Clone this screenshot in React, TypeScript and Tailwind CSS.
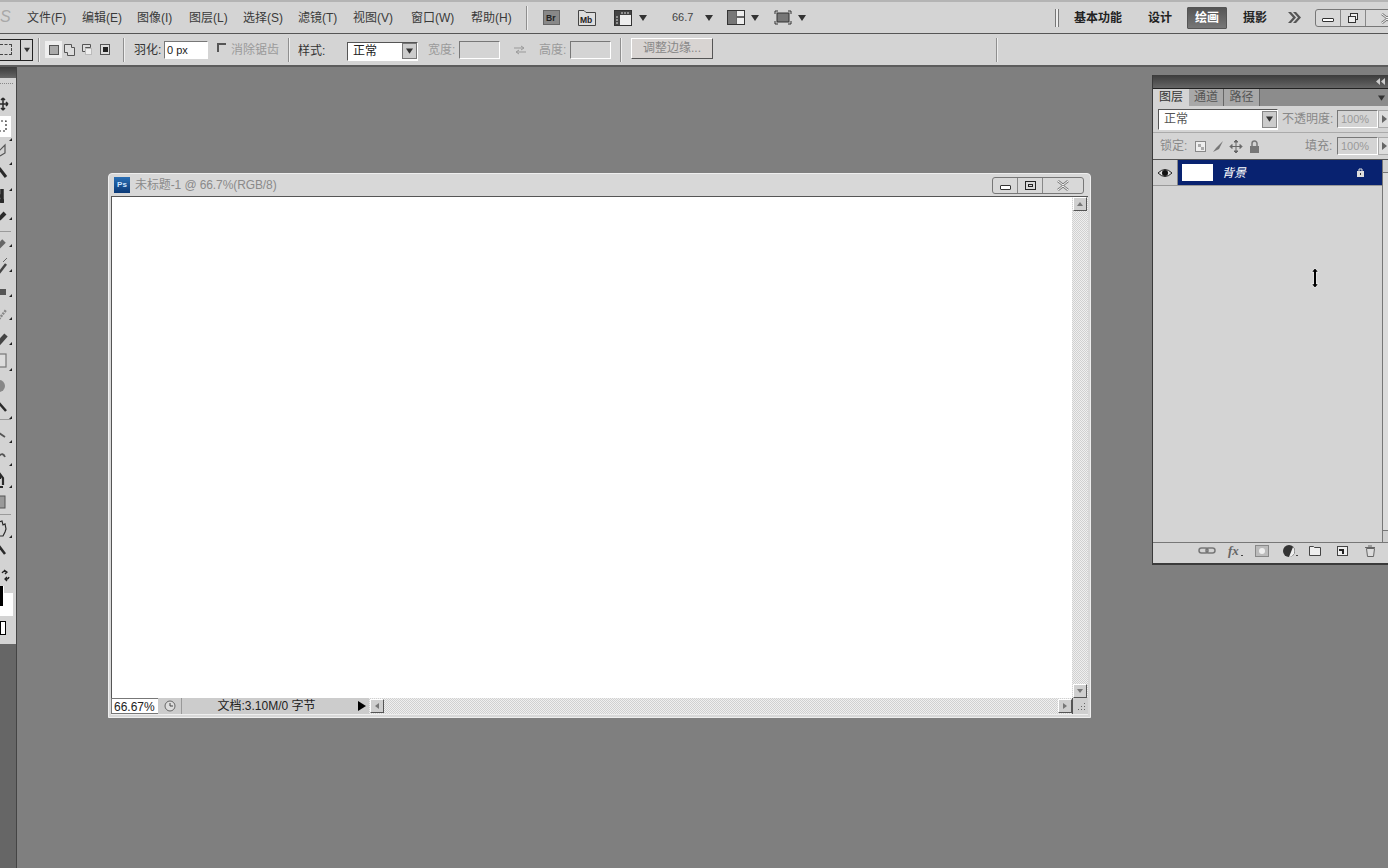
import React from "react";

const font = { fontFamily: '"Liberation Sans","Noto Sans CJK SC",sans-serif' };

function Menu({ label, w }: { label: string; w: number }) {
  return <span className="shrink-0 text-[12px] leading-none text-[#3a3a3a] whitespace-nowrap" style={{ width: w }}>{label}</span>;
}

function Tri({ className = "" }: { className?: string }) {
  return <svg width="8" height="6" viewBox="0 0 8 6" className={className}><path d="M0 0h8L4 6z" fill="#333" /></svg>;
}

function Sep({ className = "" }: { className?: string }) {
  return <div className={`w-px h-6 bg-[#8f8f8f] border-r border-[#eee] box-content shrink-0 ${className}`} />;
}

function ToolIcons() {
  return (
    <svg width="16" height="577" viewBox="0 0 16 577" className="block">
      <g stroke="#2a2a2a" strokeWidth="1.500" fill="none">
        <path d="M3 32v10M-2 37h10M3 31l-2 2M3 31l2 2M3 43l-2-2M3 43l2-2M8 37l-2-2M8 37l-2 2" />
        <rect x="-3" y="54" width="9" height="10" strokeDasharray="2 2" strokeWidth="1.200" />
        <path d="M-1 84l6-6v8l-5 3" strokeWidth="1.200" stroke="#555" />
        <path d="M-1 101l7 9" strokeWidth="3" />
        <path d="M2 122v14M-3 129h6M-3 134h7" strokeWidth="3.500" />
        <path d="M-1 152l6-6" strokeWidth="4" />
        <path d="M-2 180l6-6" strokeWidth="5" stroke="#666" />
        <path d="M-1 206l7-9" strokeWidth="2.500" stroke="#444" />
        <path d="M3 195l4-4" strokeWidth="1" stroke="#666" />
        <rect x="-3" y="222" width="9" height="6" fill="#555" strokeWidth="0" />
        <path d="M-1 252l7-9" strokeWidth="2.500" stroke="#888" strokeDasharray="2 1" />
        <path d="M-2 277l8-9" strokeWidth="4.500" stroke="#444" />
        <rect x="-3" y="287" width="9" height="13" fill="#ddd" stroke="#777" strokeWidth="1.200" />
        <circle cx="-1" cy="319" r="6" fill="#888" strokeWidth="0" />
        <path d="M-1 336l7 8" strokeWidth="2.500" />
        <path d="M-1 366l6 4" strokeWidth="1.800" stroke="#555" />
        <path d="M-1 389q4-4 6 1" strokeWidth="1.800" stroke="#555" />
        <path d="M0 412v-5l3 4v7M-2 420h5" strokeWidth="2.200" />
        <rect x="-3" y="429" width="8" height="12" fill="#999" stroke="#555" strokeWidth="1" />
        <path d="M-1 455l3-1 1 4 2-1 1 5-1 3-2 4h-4" strokeWidth="1.200" />
        <path d="M-1 479l6 8" strokeWidth="2.500" />
      </g>
      <path d="M2 506q2-3 5-1M4 503l3 2-2 2M9 510q-1 3-4 2M7 514l-2-2 2-2" stroke="#222" strokeWidth="1.300" fill="none" />
      <g fill="#222">
        {[74, 98, 124, 153, 180, 205, 230, 253, 278, 304, 352, 376, 399, 421, 471].map((y) => (
          <path key={y} d={`M9 ${y}h3v-3z`} />
        ))}
      </g>
    </svg>
  );
}

function Tools() {
  return (
    <aside className="w-[17px] shrink-0 flex flex-col border-r border-[#444] overflow-hidden">
      <div className="h-[11px] shrink-0 bg-gradient-to-b from-[#3c3c3c] to-[#666]" />
      <div className="h-[566px] shrink-0 bg-[#d3d3d3] relative">
        <div className="absolute top-[38px] left-0 w-[11px] h-[21px] bg-white" />
        <div className="absolute top-[5px] left-0 w-[13px] h-[2px] border-t border-dotted border-[#888]" />
        {[153, 341, 436].map((t) => <div key={t} className="absolute left-0 w-[11px] h-px bg-[#9a9a9a]" style={{ top: t }} />)}
        <div className="absolute top-[515px] left-0 w-[13px] h-[23px] bg-white" />
        <div className="absolute top-[508px] left-0 w-[3px] h-[20px] bg-black border-r border-b border-white box-content" />
        <div className="absolute top-[543px] left-0 w-[6px] h-[14px] bg-white border border-black" />
        <div className="absolute top-[-11px] left-0"><ToolIcons /></div>
      </div>
      <div className="flex-1 bg-[#666]" />
    </aside>
  );
}

function MenuBar() {
  const items: [string, number][] = [["文件(F)", 55], ["编辑(E)", 55], ["图像(I)", 52], ["图层(L)", 54], ["选择(S)", 55], ["滤镜(T)", 55], ["视图(V)", 58], ["窗口(W)", 60], ["帮助(H)", 48]];
  return (
    <header className="h-[34px] shrink-0 bg-[#d4d4d4] border-t-2 border-[#b4b4b4] border-b border-b-[#555] flex items-center pl-[27px] overflow-hidden relative" style={font}>
      <span className="absolute left-0 top-[7px] italic text-[#a8a8a8] text-[16px] leading-none">S</span>
      {items.map(([l, w]) => <Menu key={l} label={l} w={w} />)}
      <Sep className="ml-[7px]" />
      <svg width="17" height="15" viewBox="0 0 17 15" className="ml-[15px] shrink-0"><rect x=".5" y=".5" width="16" height="14" fill="#888" stroke="#666" /><text x="3" y="11" fontSize="8.500" fontWeight="700" fill="#222">Br</text></svg>
      <svg width="18" height="16" viewBox="0 0 18 16" className="ml-[18px] shrink-0"><path d="M.5 15.500V.5H6l2 2h9.500v13z" fill="#ddd" stroke="#444" /><text x="2" y="12.500" fontSize="8.500" fontWeight="700" fill="#222">Mb</text></svg>
      <svg width="18" height="16" viewBox="0 0 18 16" className="ml-[18px] shrink-0"><rect x=".5" y=".5" width="17" height="15" fill="#eee" stroke="#333" /><path d="M1 1h16v4H6v10H1z" fill="#444" /><path d="M8 2v2M11 2v2M14 2v2M2 7h2M2 10h2M2 13h2" stroke="#ddd" /></svg>
      <Tri className="ml-[7px] shrink-0" />
      <span className="ml-[25px] w-[33px] shrink-0 text-[11px] text-[#444] leading-none">66.7</span>
      <Tri className="shrink-0" />
      <svg width="18" height="15" viewBox="0 0 18 15" className="ml-[14px] shrink-0"><rect x=".5" y=".5" width="17" height="14" fill="#666" stroke="#333" /><path d="M10 1h7v5h-7zM10 8h7v6h-7z" fill="#eee" /><path d="M1 1h8v13H1z" fill="#777" /></svg>
      <Tri className="ml-[6px] shrink-0" />
      <svg width="18" height="15" viewBox="0 0 18 15" className="ml-[15px] shrink-0"><path d="M1 4V1h3M14 1h3v3M17 11v3h-3M4 14H1v-3" stroke="#333" fill="none" /><rect x="3" y="3" width="12" height="9" fill="#777" stroke="#333" /></svg>
      <Tri className="ml-[6px] shrink-0" />
      <div className="ml-[249px] shrink-0 w-[4px] h-[18px] border-x border-[#777] bg-[#eee]" />
      <span className="ml-[15px] w-[74px] shrink-0 text-[12px] font-bold text-[#222]">基本功能</span>
      <span className="w-[39px] shrink-0 text-[12px] font-bold text-[#222]">设计</span>
      <span className="w-[40px] h-[22px] shrink-0 rounded-[1px] bg-gradient-to-b from-[#555] to-[#777] border border-[#555] text-white text-[12px] font-bold flex items-center justify-center">绘画</span>
      <span className="ml-[16px] w-[44px] shrink-0 text-[12px] font-bold text-[#222]">摄影</span>
      <svg width="14" height="11" viewBox="0 0 14 11" className="shrink-0"><path d="M1 0l5 5.500L1 11h3l5-5.500L4 0zM6 0l5 5.500L6 11h3l5-5.500L9 0z" fill="#555" /></svg>
      <div className="ml-[14px] h-[18px] w-[80px] shrink-0 flex border border-[#777] rounded-l-[3px] bg-[#d8d8d8]">
        <div className="w-[25px] flex items-center justify-center border-r border-[#888]"><div className="w-[12px] h-[4px] mt-1 bg-white border border-[#333] rounded-[1px]" /></div>
        <div className="w-[25px] flex items-center justify-center border-r border-[#888]"><svg width="12" height="12" viewBox="0 0 12 12"><rect x="3.500" y="1.500" width="7" height="6" fill="#eee" stroke="#333" /><rect x="1.500" y="4.500" width="7" height="6" fill="#eee" stroke="#333" /></svg></div>
        <svg width="14" height="11" viewBox="0 0 14 11" className="ml-[14px] mt-[3px] shrink-0"><path d="M2 1l5 4 5-4M2 10l5-4 5 4" stroke="#777" strokeWidth="2.500" fill="none" /><path d="M2 1l5 4 5-4M2 10l5-4 5 4" stroke="#fff" strokeWidth="1" fill="none" /></svg>
      </div>
    </header>
  );
}

function OptionsBar() {
  const box = "shrink-0 h-[18px] border border-t-[#777] border-l-[#777] border-r-white border-b-white";
  const m = (cls: string, el: React.ReactNode) => <div className={cls}>{el}</div>;
  return (
    <div className="h-[33px] shrink-0 bg-[#d4d4d4] border-b-2 border-[#5c5c5c] flex items-center overflow-hidden text-[12px] text-[#333]" style={font}>
      <div className="w-[20px] h-[22px] border-y border-[#222] flex items-center shrink-0"><div className="w-[12px] h-[11px] border border-dashed border-[#444] border-l-0" /></div>
      <div className="w-[13px] h-[22px] border border-[#222] flex items-center justify-center shrink-0"><Tri className="w-[6px]" /></div>
      <Sep className="ml-[5px]" />
      {m("ml-[5px] w-[17px] h-[17px] bg-[#eee] flex items-center justify-center shrink-0", <div className="w-[10px] h-[10px] bg-[#aaa] border border-[#555]" />)}
      <svg width="52" height="14" viewBox="0 0 52 14" className="shrink-0 ml-[1px]"><g stroke="#555" fill="#ddd"><path d="M1.500 1.500h7v3h3v8h-7v-3h-3z" /><path d="M19.500 1.500h8v3h-5v4h-3z" /><rect x="22.500" y="5.500" width="6" height="6" fill="#eee" stroke="#bbb" /><rect x="37.500" y="1.500" width="9" height="10" /><rect x="40" y="4" width="5" height="5" fill="#222" stroke="none" /></g></svg>
      <Sep className="ml-[8px]" />
      <span className="ml-[9px] w-[30px] shrink-0 text-[12px]">羽化:</span>
      <div className={`${box} w-[44px] bg-white text-[11px] leading-[16px] pl-[2px] text-[#222]`}>0 px</div>
      <div className="ml-[9px] w-[9px] h-[9px] mb-[5px] border-l-2 border-t-2 border-[#555] shrink-0" />
      <span className="ml-[5px] w-[54px] shrink-0 text-[#9a9a9a]">消除锯齿</span>
      <Sep className="ml-[3px]" />
      <span className="ml-[8px] w-[49px] shrink-0 mt-[3px]">样式:</span>
      <div className="shrink-0 mt-[3px] w-[71px] h-[19px] bg-white border border-[#555] border-b-white border-r-white flex items-center justify-between pl-[5px] text-[#222]">正常<div className="w-[15px] h-[16px] bg-[#ccc] border border-[#777] flex items-center justify-center"><Tri className="w-[7px]" /></div></div>
      <span className="ml-[10px] w-[31px] shrink-0 text-[#9a9a9a]">宽度:</span>
      <div className={`${box} w-[41px]`} />
      <svg width="12" height="10" viewBox="0 0 12 10" className="ml-[14px] shrink-0"><path d="M0 3h9M7 1l3 2-3 2M12 7H3M5 5L2 7l3 2" stroke="#999" fill="none" /></svg>
      <span className="ml-[13px] w-[31px] shrink-0 text-[#9a9a9a]">高度:</span>
      <div className={`${box} w-[41px]`} />
      <Sep className="ml-[9px]" />
      <div className="ml-[9px] mb-[2px] shrink-0 w-[82px] h-[21px] bg-[#d8d4d2] border border-t-white border-l-white border-r-[#555] border-b-[#555] text-[#888] text-center leading-[19px]">调整边缘...</div>
      <Sep className="ml-[283px]" />
    </div>
  );
}

function ScrollBtn({ d, className = "" }: { d: string; className?: string }) {
  return <div className={`w-[14px] h-[14px] shrink-0 bg-[#cfcfcf] border border-t-white border-l-white border-r-[#555] border-b-[#555] flex items-center justify-center ${className}`}><svg width="8" height="8" viewBox="0 0 8 8"><path d={d} fill="#777" /></svg></div>;
}

function DocWindow() {
  const hatch = { backgroundImage: "repeating-conic-gradient(#d0d0d0 0 25%, #efefef 0 50%)", backgroundSize: "2px 2px" };
  return (
    <section className="absolute left-[108px] top-[173px] w-[983px] h-[545px] bg-[#d8d8d8] border border-[#eee] rounded-t-[4px] flex flex-col px-[2px] pb-[2px]" style={font}>
      <div className="h-[22px] shrink-0 flex items-center pl-[3px] pr-[4px]">
        <div className="w-[16px] h-[16px] bg-gradient-to-b from-[#2a6fb5] to-[#0c3a78] text-[#cfe6ff] text-[8px] font-bold leading-[16px] text-center shrink-0">Ps</div>
        <span className="ml-[5px] text-[12px] text-[#8a8a8a] tracking-[-0.1px]">未标题-1 @ 66.7%(RGB/8)</span>
        <div className="ml-auto h-[17px] w-[92px] flex border border-[#777] rounded-[3px]">
          <div className="w-[25px] flex items-center justify-center border-r border-[#888]"><div className="w-[11px] h-[5px] mt-1 bg-white border border-[#333] rounded-[1px]" /></div>
          <div className="w-[25px] flex items-center justify-center border-r border-[#888]"><div className="w-[11px] h-[9px] border border-[#222] flex items-center justify-center"><div className="w-[5px] h-[3px] border border-[#222]" /></div></div>
          <div className="flex-1 flex items-center justify-center"><svg width="14" height="11" viewBox="0 0 14 11"><path d="M2 1l5 4 5-4M2 10l5-4 5 4" stroke="#777" strokeWidth="2.500" fill="none" /><path d="M2 1l5 4 5-4M2 10l5-4 5 4" stroke="#fff" strokeWidth="1" fill="none" /></svg></div>
        </div>
      </div>
      <div className="flex-1 min-h-0 flex border-t border-l border-[#555]">
        <div className="flex-1 bg-white" />
        <div className="w-[16px] shrink-0 flex flex-col" style={hatch}>
          <ScrollBtn d="M4 2l3 4H1z" className="mx-auto" />
          <div className="flex-1" />
          <ScrollBtn d="M1 2h6L4 6z" className="mx-auto" />
        </div>
      </div>
      <div className="h-[17px] shrink-0 flex items-stretch border-b border-[#eee]" style={hatch}>
        <div className="w-[47px] bg-white border border-[#777] border-r-0 text-[12px] leading-[17px] pl-[2px] text-[#222] shrink-0">66.67%</div>
        <div className="w-[24px] bg-[#ccc] border-r border-[#999] flex items-center justify-center shrink-0"><svg width="12" height="12" viewBox="0 0 12 12"><circle cx="6" cy="6" r="5" fill="#ddd" stroke="#666" /><path d="M6 3v3h3" stroke="#444" fill="none" /></svg></div>
        <div className="w-[172px] bg-[#ccc] text-[12px] leading-[17px] text-[#222] flex justify-center shrink-0 pr-[3px]">文档:3.10M/0 字节</div>
        <div className="w-[15px] bg-[#ccc] flex items-center justify-center shrink-0"><svg width="8" height="10" viewBox="0 0 8 10"><path d="M0 0l8 5-8 5z" fill="#000" /></svg></div>
        <ScrollBtn d="M6 1v6L2 4z" className="ml-[1px] mt-[1px]" />
        <div className="flex-1" />
        <ScrollBtn d="M2 1v6l4-3z" className="mt-[1px]" />
        <div className="w-[16px] bg-[#cfcfcf] border-l border-[#555] shrink-0 flex items-end justify-end p-[2px]"><svg width="10" height="10" viewBox="0 0 10 10"><path d="M8 1h1v1H8zM5 4h1v1H5zM8 4h1v1H8zM2 7h1v1H2zM5 7h1v1H5zM8 7h1v1H8z" fill="#666" /></svg></div>
      </div>
    </section>
  );
}

function LayersPanel() {
  const small = "h-[18px] border border-t-[#777] border-l-[#777] border-r-white border-b-white text-[11px] text-[#9a9a9a] leading-[16px] pl-[3px] shrink-0";
  return (
    <section className="absolute left-[1152px] top-[75px] w-[240px] h-[490px] bg-[#d4d4d4] border-l border-b-2 border-[#3a3a3a] flex flex-col text-[12px]" style={font}>
      <div className="h-[13px] shrink-0 bg-gradient-to-b from-[#3c3c3c] to-[#666] text-[#ddd] flex items-center justify-end pr-[7px]"><svg width="9" height="7" viewBox="0 0 9 7"><path d="M4 0v7L0 3.500zM9 0v7L5 3.500z" fill="#ccc" /></svg></div>
      <div className="h-[18px] shrink-0 bg-[#8c8c8c] border-t border-[#222] flex text-[#555]">
        <div className="w-[36px] bg-[#d4d4d4] text-[#333] text-center leading-[17px] shrink-0">图层</div>
        <div className="w-[35px] border-r border-[#666] bg-[#a8a8a8] text-center leading-[17px] shrink-0">通道</div>
        <div className="w-[36px] border-r border-[#666] bg-[#a8a8a8] text-center leading-[17px] shrink-0">路径</div>
        <Tri className="ml-auto mr-[7px] mt-[6px] w-[7px]" />
      </div>
      <div className="h-[27px] shrink-0 flex items-center pl-[5px] border-b border-[#aaa]">
        <div className="w-[120px] h-[21px] bg-white border border-[#555] border-b-white border-r-white flex items-center justify-between pl-[5px] text-[#555] shrink-0">正常<div className="w-[15px] h-[17px] bg-[#ccc] border border-[#888] flex items-center justify-center"><Tri className="w-[7px]" /></div></div>
        <span className="ml-[4px] w-[55px] text-[#888] shrink-0">不透明度:</span>
        <div className={`${small} w-[41px]`}>100%</div>
        <div className="w-[12px] h-[18px] bg-[#ddd] border border-[#aaa] flex items-center justify-center shrink-0"><svg width="5" height="8" viewBox="0 0 5 8"><path d="M0 0l5 4-5 4z" fill="#666" /></svg></div>
      </div>
      <div className="h-[27px] shrink-0 flex items-center pl-[7px] border-b border-[#555] text-[#888]">
        <span className="w-[32px] shrink-0">锁定:</span>
        <svg width="66" height="13" viewBox="0 0 66 13" className="shrink-0 ml-[3px]"><rect x=".5" y="1.500" width="10" height="10" fill="#eee" stroke="#888" /><path d="M3 4h3v3H3zM6 7h3v3H6z" fill="#aaa" /><path d="M18 12l3-4 7-7-4 8-4 2z" fill="#777" /><path d="M41 1v11M35.500 6.500h11M41 0l-2 2h4zM41 13l-2-2h4zM35 6.500l2-2v4zM47 6.500l-2-2v4z" stroke="#666" fill="#666" strokeWidth="1" /><rect x="55" y="6" width="9" height="7" fill="#777" /><path d="M57 6V3.500a2.500 2.500 0 0 1 5 0V6" stroke="#777" strokeWidth="1.500" fill="none" /></svg>
        <span className="ml-[44px] w-[32px] shrink-0">填充:</span>
        <div className={`${small} w-[41px]`}>100%</div>
        <div className="w-[12px] h-[18px] bg-[#ddd] border border-[#aaa] flex items-center justify-center shrink-0"><svg width="5" height="8" viewBox="0 0 5 8"><path d="M0 0l5 4-5 4z" fill="#666" /></svg></div>
      </div>
      <div className="flex-1 min-h-0 relative flex flex-col">
        <div className="flex-1 min-h-0 flex">
          <div className="w-[229px] shrink-0 flex flex-col">
            <div className="h-[26px] shrink-0 flex border-b border-[#999]">
              <div className="w-[25px] flex items-center justify-center border-r border-[#888] bg-[#d0d0d0] shrink-0"><svg width="14" height="10" viewBox="0 0 14 10"><path d="M0 5q7-7 14 0q-7 7-14 0z" fill="#ddd" stroke="#222" /><circle cx="7" cy="5" r="3" fill="#111" /></svg></div>
              <div className="flex-1 bg-[#082270] flex items-center pl-[4px] pr-[17px] text-white">
                <div className="w-[31px] h-[17px] bg-white shrink-0" />
                <span className="ml-[9px] italic text-[12px]">背景</span>
                <svg width="9" height="9" viewBox="0 0 9 9" className="ml-auto"><rect x="1" y="3" width="7" height="6" fill="#ddd" /><path d="M3 3V1h3v2" stroke="#ddd" fill="none" /><rect x="4" y="5" width="1" height="2" fill="#333" /></svg>
              </div>
            </div>
          </div>
          <div className="w-[7px] shrink-0 border-l border-[#777] bg-[#dcdcdc] flex flex-col">
            <div className="h-[13px] bg-[#cfcfcf] border-b border-[#777]" />
            <div className="flex-1" />
            <div className="h-[12px] bg-[#cfcfcf] border-t border-[#777]" />
          </div>
        </div>
        <svg width="14" height="20" viewBox="0 0 14 20" className="absolute left-[155px] top-[108px]"><path d="M7 0l3.500 4H8.500v12h2L7 20l-3.500-4h2V4h-2z" fill="#000" stroke="#fff" strokeWidth=".8" /></svg>
      </div>
      <div className="h-[21px] shrink-0 border-t border-[#777] flex items-start pt-[1px] pl-[45px]">
        <svg width="190" height="14" viewBox="0 0 190 14" className="shrink-0">
          <g stroke="#777" fill="none" strokeWidth="1.500"><rect x="1" y="4" width="9" height="5" rx="2.500" /><rect x="8" y="4" width="9" height="5" rx="2.500" /></g>
          <text x="30" y="11" fontSize="13" fontStyle="italic" fontWeight="700" fill="#666" fontFamily="Liberation Serif">fx</text>
          <path d="M43 11h2v1h-2z" fill="#444" />
          <rect x="57.500" y="1.500" width="13" height="11" fill="#bbb" stroke="#888" /><circle cx="64" cy="7" r="3" fill="#eee" />
          <circle cx="91" cy="7" r="6" fill="#333" /><path d="M91 13a6 6 0 0 0 4-10z" fill="#eee" />
          <path d="M98 11h2v1h-2z" fill="#444" />
          <path d="M111.500 2.500h4l1 1h6v8h-11z" fill="#eee" stroke="#444" />
          <rect x="139.500" y="2.500" width="10" height="9" fill="#eee" stroke="#444" /><path d="M141 5h5v5h-2V7h-3z" fill="#222" />
          <path d="M168.500 4.500h8l-1 8h-6zM167 3.500h10M170 2h4" stroke="#666" fill="#ddd" />
        </svg>
      </div>
    </section>
  );
}

export default function App() {
  return (
    <div className="w-[1388px] h-[868px] bg-[#7f7f7f] flex flex-col overflow-hidden relative">
      <MenuBar />
      <OptionsBar />
      <div className="flex-1 min-h-0 flex">
        <Tools />
      </div>
      <DocWindow />
      <LayersPanel />
    </div>
  );
}
